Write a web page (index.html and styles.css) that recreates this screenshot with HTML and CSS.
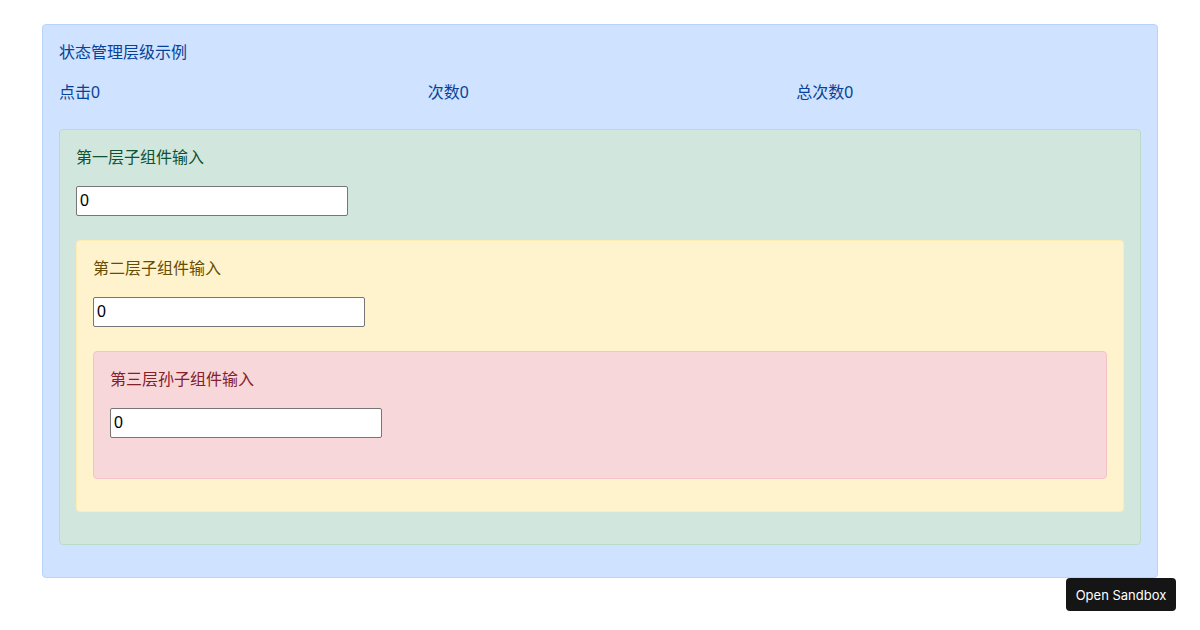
FILE: index.html
```html
<!DOCTYPE html>
<html lang="zh">
<head>
<meta charset="utf-8">
<title>状态管理层级示例</title>
<link rel="stylesheet" href="styles.css">
</head>
<body>
<div class="container">
  <div class="panel panel-blue">
    <div class="title">状态管理层级示例</div>
    <div class="stats">
      <div>点击0</div>
      <div>次数0</div>
      <div>总次数0</div>
    </div>
    <div class="panel panel-green">
      <div class="title">第一层子组件输入</div>
      <input class="field" type="text" value="0">
      <div class="panel panel-yellow">
        <div class="title">第二层子组件输入</div>
        <input class="field" type="text" value="0">
        <div class="panel panel-red">
          <div class="title">第三层孙子组件输入</div>
          <input class="field" type="text" value="0">
        </div>
      </div>
    </div>
  </div>
</div>
<button class="sandbox">Open Sandbox</button>
</body>
</html>
```

FILE: styles.css
```css
html, body {
  margin: 0;
  padding: 0;
  background: #ffffff;
}
body {
  font-family: "Liberation Sans", Arial, "Noto Sans CJK SC", sans-serif;
  font-size: 16px;
  line-height: 24px;
}
.container {
  width: 1116px;
  margin: 0 auto;
  padding: 24px 0 0 0;
}
.panel {
  border: 1px solid;
  border-radius: 4px;
  padding: 16px;
  margin-bottom: 16px;
}
.panel-blue {
  background: #cfe2ff;
  border-color: #b6d4fe;
  color: #084298;
}
.panel-green {
  background: #d1e7dd;
  border-color: #badbcc;
  color: #0f5132;
}
.panel-yellow {
  background: #fff3cd;
  border-color: #ffecb5;
  color: #664d03;
}
.panel-red {
  background: #f8d7da;
  border-color: #f5c2c7;
  color: #842029;
}
.title {
  font-size: 16px;
  line-height: 24px;
  margin-bottom: 16px;
}
.stats {
  display: grid;
  grid-template-columns: repeat(3, 1fr);
  column-gap: 24px;
  margin-bottom: 24px;
}
.field {
  display: block;
  box-sizing: border-box;
  width: 272px;
  height: 30px;
  margin: 0 0 24px 0;
  padding: 1px 3px;
  border: 1px solid #767676;
  border-radius: 2px;
  background: #ffffff;
  color: #000000;
  font-family: "Liberation Sans", Arial, sans-serif;
  font-size: 16px;
}
.sandbox {
  position: fixed;
  right: 24px;
  bottom: 19px;
  width: 110px;
  height: 33px;
  border: none;
  border-radius: 4px;
  background: #151515;
  color: #ffffff;
  font-family: Inter, "Liberation Sans", sans-serif;
  font-size: 13px;
  padding: 0;
}
```
